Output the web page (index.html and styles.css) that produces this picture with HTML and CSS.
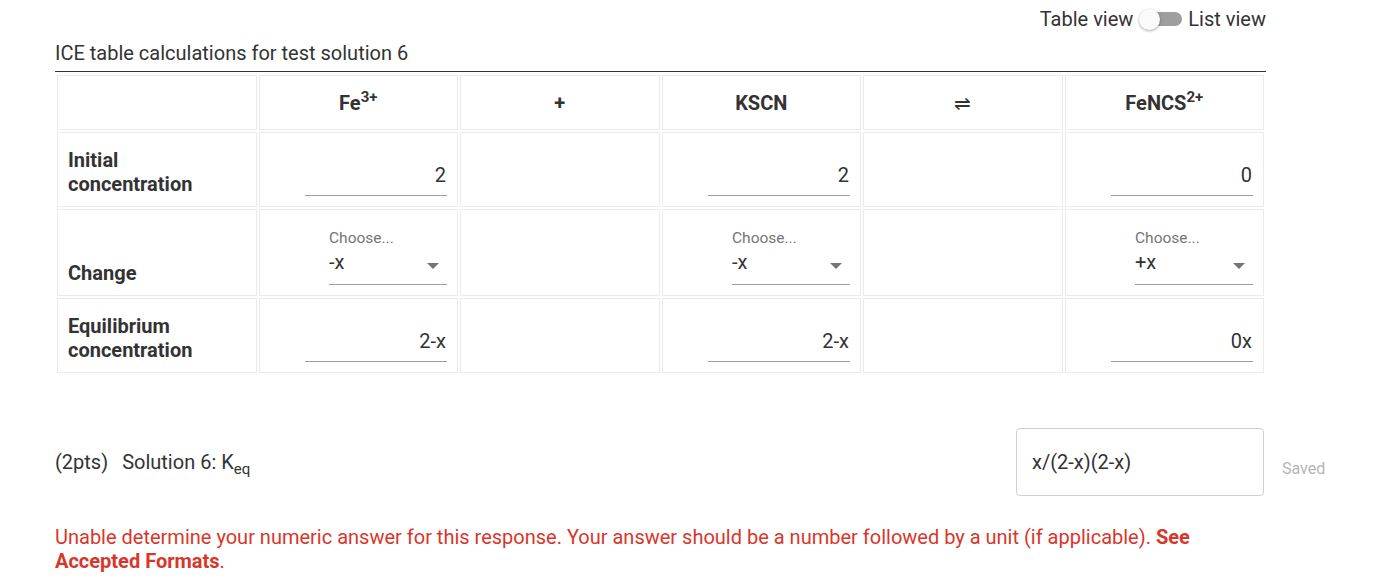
FILE: index.html
```html
<!DOCTYPE html>
<html>
<head>
<meta charset="utf-8">
<link rel="stylesheet" href="styles.css">
</head>
<body>
<div class="page">
  <div class="toggle-row">
    <span class="toggle-label">Table view</span>
    <span class="switch"><span class="track"></span><span class="knob"></span></span>
    <span class="toggle-label">List view</span>
  </div>
  <h2 class="title">ICE table calculations for test solution 6</h2>
  <table class="ice">
    <tr class="head-row">
      <td class="cell"></td>
      <td class="cell head">Fe<sup>3+</sup></td>
      <td class="cell head">+</td>
      <td class="cell head">KSCN</td>
      <td class="cell head arrow">⇌</td>
      <td class="cell head">FeNCS<sup>2+</sup></td>
    </tr>
    <tr class="row-i">
      <td class="cell label">Initial<br>concentration</td>
      <td class="cell val"><div class="field">2</div></td>
      <td class="cell"></td>
      <td class="cell val"><div class="field">2</div></td>
      <td class="cell"></td>
      <td class="cell val"><div class="field">0</div></td>
    </tr>
    <tr class="row-c">
      <td class="cell label">Change</td>
      <td class="cell val">
        <div class="select-wrap">
          <div class="select-label">Choose...</div>
          <div class="select"><span>-x</span><svg class="caret" width="12" height="6" viewBox="0 0 12 6"><path d="M0 0H12L6 6Z" fill="#757575"/></svg></div>
        </div>
      </td>
      <td class="cell"></td>
      <td class="cell val">
        <div class="select-wrap">
          <div class="select-label">Choose...</div>
          <div class="select"><span>-x</span><svg class="caret" width="12" height="6" viewBox="0 0 12 6"><path d="M0 0H12L6 6Z" fill="#757575"/></svg></div>
        </div>
      </td>
      <td class="cell"></td>
      <td class="cell val">
        <div class="select-wrap">
          <div class="select-label">Choose...</div>
          <div class="select"><span>+x</span><svg class="caret" width="12" height="6" viewBox="0 0 12 6"><path d="M0 0H12L6 6Z" fill="#757575"/></svg></div>
        </div>
      </td>
    </tr>
    <tr class="row-e">
      <td class="cell label">Equilibrium<br>concentration</td>
      <td class="cell val"><div class="field">2-x</div></td>
      <td class="cell"></td>
      <td class="cell val"><div class="field">2-x</div></td>
      <td class="cell"></td>
      <td class="cell val"><div class="field">0x</div></td>
    </tr>
  </table>
  <div class="answer-row">
    <div class="question"><span class="pts">(2pts)</span><span>Solution 6: K<sub>eq</sub></span></div>
    <div class="answer-box">x/(2-x)(2-x)</div>
    <div class="saved">Saved</div>
  </div>
  <p class="error">Unable determine your numeric answer for this response. Your answer should be a number followed by a unit (if applicable). <b>See Accepted Formats</b>.</p>
</div>
</body>
</html>
```

FILE: styles.css
```css
* { box-sizing: border-box; }
body {
  margin: 0;
  background: #fff;
  font-family: Roboto, "Liberation Sans", Arial, sans-serif;
  color: #333;
  font-size: 20px;
}
.page {
  padding-left: 55px;
  width: 1266px;
}
.toggle-row {
  height: 38px;
  display: flex;
  align-items: center;
  justify-content: flex-end;
}
.toggle-label {
  font-size: 20px;
  line-height: 24px;
  color: #333;
}
.switch {
  display: flex;
  align-items: center;
  width: 43px;
  height: 22px;
  margin: 0 6px 0 6px;
}
.track {
  width: 36px;
  height: 14px;
  margin-left: 7px;
  border-radius: 7px;
  background: #9e9e9e;
}
.knob {
  width: 21px;
  height: 21px;
  border-radius: 50%;
  background: #fafafa;
  box-shadow: 0 1px 3px rgba(0,0,0,0.35);
  margin-left: -43px;
}
.title {
  margin: 3px 0 0;
  font-size: 20px;
  font-weight: 400;
  line-height: 24px;
  padding-bottom: 6px;
  border-bottom: 1px solid #333;
  color: #333;
}
.ice {
  width: 1211px;
  border-collapse: separate;
  border-spacing: 2px;
  table-layout: fixed;
  margin-top: 1px;
}
.cell {
  border: 1px solid #ebebeb;
  padding: 0 10px 10px 10px;
  vertical-align: bottom;
}
.head-row { height: 55px; }
.row-i { height: 75px; }
.row-c { height: 87px; }
.row-e { height: 75px; }
.head {
  text-align: center;
  vertical-align: middle;
  font-weight: 700;
  padding: 0 10px;
}
.head sup {
  font-size: 15px;
  line-height: 0;
  vertical-align: 8px;
}
.head.arrow {
  font-weight: 400;
  font-size: 20px;
}
.label {
  font-weight: 700;
  line-height: 24px;
  padding-bottom: 10px;
}
.val { text-align: right; }
.field {
  display: inline-block;
  width: 142px;
  height: 32px;
  border-bottom: 1px solid #9e9e9e;
  text-align: right;
  line-height: 22px;
  padding: 0 1px 8px 0;
  vertical-align: bottom;
}
.select-wrap {
  display: inline-block;
  width: 118px;
  text-align: left;
  vertical-align: bottom;
}
.select-label {
  font-size: 15.5px;
  line-height: 16px;
  color: #757575;
  margin-bottom: 1px;
}
.select {
  height: 38px;
  border-bottom: 1px solid #9e9e9e;
  padding-top: 3px;
  line-height: 24px;
  display: flex;
  justify-content: space-between;
  align-items: flex-start;
}
.caret {
  margin-top: 13px;
  margin-right: 8px;
}
.answer-row {
  display: flex;
  align-items: center;
  width: 1227px;
  margin-top: 53px;
}
.question {
  flex: 1;
  display: flex;
  gap: 14px;
  line-height: 24px;
}
.question sub {
  font-size: 15px;
  line-height: 0;
  vertical-align: -5px;
}
.answer-box {
  width: 248px;
  height: 68px;
  border: 1px solid #cfcfcf;
  border-radius: 4px;
  padding-left: 15px;
  display: flex;
  align-items: center;
}
.saved {
  width: 0;
  margin-left: 18px;
  white-space: nowrap;
  font-size: 16px;
  color: #b5b5b5;
  padding-top: 12px;
}
.error {
  margin: 29px 0 0;
  width: 1211px;
  color: #d9362b;
  line-height: 24px;
  font-size: 20px;
}
.error b { font-weight: 700; }
```
